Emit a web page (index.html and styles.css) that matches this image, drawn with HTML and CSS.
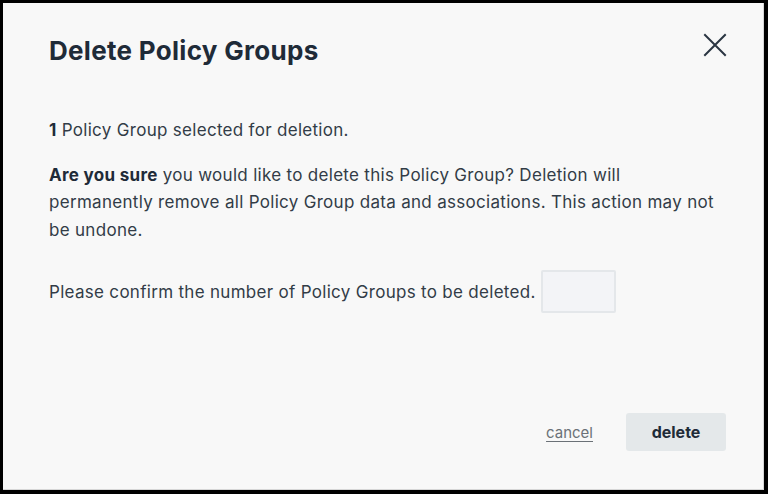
FILE: index.html
```html
<!DOCTYPE html>
<html>
<head>
<meta charset="utf-8">
<link rel="stylesheet" href="styles.css">
</head>
<body>
<div class="dialog">
  <div class="header">
    <h1 class="title">Delete Policy Groups</h1>
    <button class="close" aria-label="close">
      <svg width="24" height="24" viewBox="0 0 24 24"><path d="M2 2 L22 22 M22 2 L2 22" stroke="#2a3542" stroke-width="2" fill="none" stroke-linecap="square"/></svg>
    </button>
  </div>
  <div class="body">
    <p class="para"><strong>1</strong> Policy Group selected for deletion.</p>
    <p class="para"><strong>Are you sure</strong> you would like to delete this Policy Group? Deletion will permanently remove all Policy Group data and associations. This action may not be undone.</p>
    <div class="confirm">
      <span>Please confirm the number of Policy Groups to be deleted.</span>
      <input class="count" type="text">
    </div>
  </div>
  <div class="footer">
    <a class="cancel" href="#">cancel</a>
    <button class="delete">delete</button>
  </div>
</div>
</body>
</html>
```

FILE: styles.css
```css
html, body {
  margin: 0;
  padding: 0;
  background: #000;
  height: 100%;
}
body {
  font-family: Inter, "Noto Sans", sans-serif;
  color: #323c47;
}
.dialog {
  box-sizing: border-box;
  margin: 3px 4px 0 3px;
  height: 487px;
  background: #f8f8f8;
  border-bottom: 1px solid #d6d6d6;
  border-right: 1px solid #d6d6d6;
  padding: 30px 37px 0 46px;
  display: flex;
  flex-direction: column;
}
.header {
  display: flex;
  justify-content: space-between;
  align-items: flex-start;
}
.title {
  margin: 0;
  font-size: 26px;
  line-height: 36px;
  font-weight: 700;
  color: #1f2b38;
  letter-spacing: 0.3px;
}
.close {
  border: 0;
  background: none;
  padding: 0;
  margin-top: 0;
  margin-right: -1px;
  width: 24px;
  height: 24px;
  cursor: pointer;
}
.close svg { display: block; }
.body {
  padding-top: 48px;
  padding-right: 2px;
}
.para {
  margin: 0 0 17px;
  font-size: 17px;
  line-height: 27.5px;
  letter-spacing: 0.3px;
}
.para strong { font-weight: 700; color: #1f2b38; }
.confirm {
  margin-top: 26px;
  display: flex;
  align-items: center;
  gap: 5px;
  font-size: 17px;
  line-height: 28px;
  letter-spacing: 0.3px;
}
.count {
  box-sizing: border-box;
  width: 75px;
  height: 43px;
  background: #f3f4f7;
  border: 2px solid #e4e7ea;
  border-radius: 2px;
  outline: none;
}
.footer {
  margin-top: auto;
  margin-bottom: 38px;
  display: flex;
  justify-content: flex-end;
  align-items: center;
  gap: 33px;
}
.cancel {
  font-size: 15px;
  color: #6b7177;
  text-decoration: underline;
  text-underline-offset: 3px;
}
.delete {
  width: 100px;
  height: 38px;
  border: 0;
  border-radius: 3px;
  background: #e4e8ea;
  font-family: Inter, sans-serif;
  font-size: 16px;
  font-weight: 700;
  color: #1f2b38;
}
```
